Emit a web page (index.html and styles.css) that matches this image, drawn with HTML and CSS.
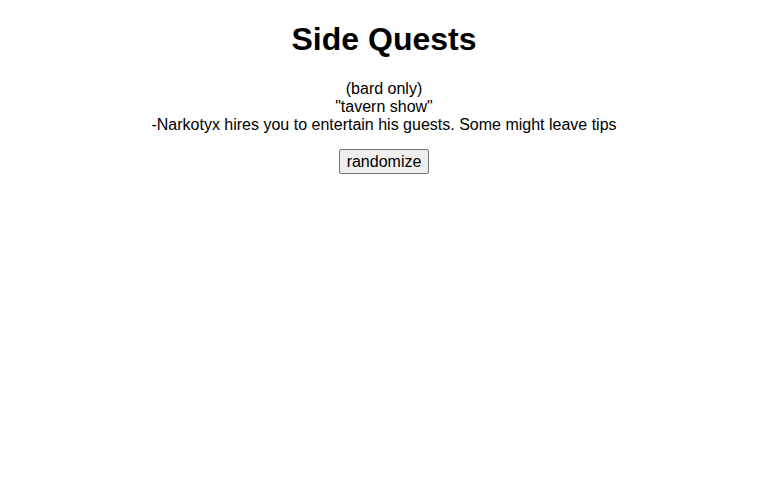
FILE: index.html
```html
<!DOCTYPE html>
<html>
<head>
<meta charset="utf-8">
<title>Side Quests</title>
<link rel="stylesheet" href="styles.css">
</head>
<body>
<main class="page">
  <h1 class="title">Side Quests</h1>
  <div class="quest">
    <div class="quest-line">(bard only)</div>
    <div class="quest-line">"tavern show"</div>
    <div class="quest-line">-Narkotyx hires you to entertain his guests. Some might leave tips</div>
  </div>
  <button class="randomize" type="button">randomize</button>
</main>
</body>
</html>
```
FILE: styles.css
```css
body {
  margin: 8px;
  background: #ffffff;
  color: #000000;
  font-family: "Liberation Sans", Arial, sans-serif;
  font-size: 16px;
}

.page {
  display: flex;
  flex-direction: column;
  align-items: center;
  text-align: center;
}

.title {
  font-size: 32px;
  font-weight: bold;
  margin: 13px 0 22px;
}

.quest {
  line-height: 18px;
}

.randomize {
  margin-top: 15px;
  font-family: "Liberation Sans", Arial, sans-serif;
  font-size: 16px;
  line-height: 19px;
  color: #000000;
  background: #efefef;
  border: 1px solid #767676;
  border-radius: 2px;
  padding: 2px 7px;
}
```
